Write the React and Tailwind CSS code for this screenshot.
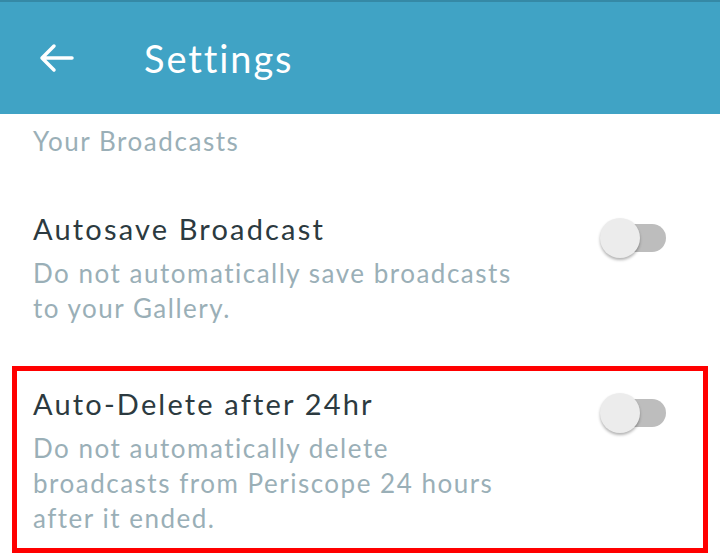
import React from 'react';

const font = { fontFamily: 'Lato, "Open Sans", sans-serif' };

const Toggle = () => (
  <div className="relative mt-[6px] h-[42px] w-[68px] shrink-0">
    <div className="absolute left-[6px] top-[7px] h-[28px] w-[60px] rounded-full bg-[#bdbdbd]" />
    <div className="absolute left-0 top-[1px] h-[40px] w-[40px] rounded-full bg-[#ececec] shadow-[0_2px_3px_rgba(0,0,0,0.3)]" />
  </div>
);

const Row = ({ title, desc }) => (
  <div className="flex items-start justify-between">
    <div>
      <div className="text-[29px] leading-[35px] tracking-[0.075em] text-[#2c3a40]">{title}</div>
      <div className="mt-[10px] text-[26px] leading-[35px] tracking-[0.058em] text-[#9aafb7]">{desc}</div>
    </div>
    <Toggle />
  </div>
);

export default function App() {
  return (
    <div className="h-[558px] w-[720px] overflow-hidden bg-white" style={font}>
      <div className="h-[2px] bg-[#3589a6]" />
      <div className="flex h-[112px] items-center bg-[#40a3c5] pl-[38px]">
        <svg width="36" height="32" viewBox="0 0 36 32" className="mr-[70px]">
          <path d="M34 16H4M16 4L4 16l12 12" fill="none" stroke="white" strokeWidth="3.5" strokeLinecap="round" strokeLinejoin="round" />
        </svg>
        <span className="text-[38px] tracking-[0.05em] text-white">Settings</span>
      </div>
      <div className="px-[33px] pt-[10px] text-[26px] leading-[35px] tracking-[0.06em] text-[#9aafb7]">Your Broadcasts</div>
      <div className="pl-[33px] pr-[52px] pt-[52px]">
        <Row
          title="Autosave Broadcast"
          desc={<>Do not automatically save broadcasts<br />to your Gallery.</>}
        />
      </div>
      <div className="ml-[12px] mt-[40px] h-[187px] w-[696px] border-[5px] border-[#ff0000] pl-[16px] pr-[35px] pt-[15px]">
        <Row
          title="Auto-Delete after 24hr"
          desc={<>Do not automatically delete<br />broadcasts from Periscope 24 hours<br />after it ended.</>}
        />
      </div>
    </div>
  );
}
